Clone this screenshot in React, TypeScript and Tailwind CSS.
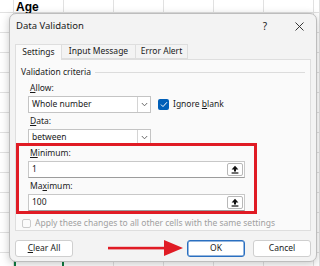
import React from 'react'

const font = { fontFamily: '"Noto Sans", "Open Sans", sans-serif' }

function Chevron() {
  return (
    <svg width="7" height="5" viewBox="0 0 7 5" fill="none">
      <path d="M0.8 1 L3.5 3.8 L6.2 1" stroke="#5a5a5a" strokeWidth="0.9" />
    </svg>
  )
}

function UploadIcon() {
  return (
    <svg width="8" height="9" viewBox="0 0 8 9">
      <path d="M4 0.8 L7.4 4.4 H5 V6.6 H3 V4.4 H0.6 Z" fill="#111" />
      <rect x="0.6" y="7.4" width="6.8" height="1.2" fill="#111" />
    </svg>
  )
}

function Select({ value }: { value: string }) {
  return (
    <div className="flex h-[17px] w-[123px] border border-[#c4c4c4] bg-white">
      <div className="flex flex-1 items-center pl-[3px] text-[8.5px] text-[#1a1a1a]">{value}</div>
      <div className="flex w-[13px] items-center justify-center border-l border-[#d4d4d4]">
        <Chevron />
      </div>
    </div>
  )
}

function RangeInput({ value }: { value: string }) {
  return (
    <div className="flex h-[17px] w-[217px] items-center border border-[#c8c8c8] border-b-[#9c9c9c] bg-white pl-[3px] pr-[1px]">
      <span className="flex-1 text-[8.5px] text-[#1a1a1a]">{value}</span>
      <div className="flex h-[13px] w-[16px] items-center justify-center rounded-[2px] border border-[#b8b8b8] bg-white">
        <UploadIcon />
      </div>
    </div>
  )
}

function Label({ children }: { children: React.ReactNode }) {
  return <div className="flex h-[12px] items-center pl-[14px] text-[8.5px] text-[#1a1a1a]">{children}</div>
}

function Button({ children, primary }: { children: React.ReactNode; primary?: boolean }) {
  return (
    <button
      className={`flex h-[17px] w-[58px] items-center justify-center rounded-[3px] bg-white text-[8.5px] text-[#1a1a1a] ${
        primary ? 'border border-[#2a6fc0] shadow-[inset_0_0_0_0.5px_#2a6fc0]' : 'border border-[#cfcfcf]'
      }`}
    >
      {children}
    </button>
  )
}

export default function App() {
  const rows = 14
  const cols = 8

  return (
    <div className="relative h-[266px] w-[320px] overflow-hidden bg-white" style={font}>
      {/* sheet grid */}
      <div className="grid grid-cols-[14px_repeat(6,50px)_1fr] grid-rows-[13px_repeat(13,20px)]">
        {Array.from({ length: rows * cols }).map((_, i) => {
          const r = Math.floor(i / cols)
          const c = i % cols
          const selected = r === 13 && c === 1
          return (
            <div
              key={i}
              className={`relative ${selected ? 'border-2 border-[#107c41]' : 'border-b border-r border-[#e1e1e1]'}`}
            >
              {r === 0 && c === 1 && (
                <span
                  className="absolute left-[2px] top-[1px] text-[12px] font-bold leading-[12px] text-black"
                  style={{ fontFamily: '"Liberation Sans", Arial, sans-serif' }}
                >
                  Age
                </span>
              )}
            </div>
          )
        })}
      </div>

      {/* dialog */}
      <div className="absolute left-[9px] top-[13px] flex h-[249px] w-[308px] flex-col rounded-[7px] border border-[#bdbdbd] bg-[#f3f3f3] shadow-[0_2px_8px_rgba(0,0,0,0.22)]">
        <div className="flex h-[24px] items-center pl-[6px] pr-[12px]">
          <span className="flex-1 text-[9.5px] text-[#1a1a1a]">Data Validation</span>
          <span className="mr-[28px] text-[10px] text-[#1a1a1a]">?</span>
          <svg width="9" height="9" viewBox="0 0 9 9">
            <path d="M0.5 0.5 L8.5 8.5 M8.5 0.5 L0.5 8.5" stroke="#222" strokeWidth="0.9" />
          </svg>
        </div>

        {/* tabs */}
        <div className="mt-[6px] flex h-[15px] items-end pl-[5px]">
          <div className="relative z-10 -mb-px flex h-[16px] w-[47px] items-center justify-center border border-b-0 border-[#dedede] bg-[#fafafa] text-[8.5px] text-[#1a1a1a]">
            Settings
          </div>
          <div className="flex h-[15px] w-[74px] items-center justify-center border border-l-0 border-[#dedede] bg-[#f3f3f3] text-[8.5px] text-[#1a1a1a]">
            Input Message
          </div>
          <div className="flex h-[15px] w-[52px] items-center justify-center border border-l-0 border-[#dedede] bg-[#f3f3f3] text-[8.5px] text-[#1a1a1a]">
            Error Alert
          </div>
        </div>

        {/* panel */}
        <div className="relative mx-[5px] flex h-[172px] flex-col border border-[#dedede] bg-[#fafafa]">
          <div className="mt-[6px] flex h-[12px] items-center gap-[4px] px-[5px]">
            <span className="text-[8.5px] text-[#1a1a1a]">Validation criteria</span>
            <div className="h-px flex-1 bg-[#dcdcdc]" />
          </div>

          <div className="mt-[4px]">
            <Label>
              <span className="underline">A</span>llow:
            </Label>
          </div>
          <div className="mt-[2px] flex items-center pl-[12px]">
            <Select value="Whole number" />
            <div className="ml-[7px] flex h-[11px] w-[11px] items-center justify-center rounded-[2px] bg-[#005fb8]">
              <svg width="8" height="7" viewBox="0 0 8 7">
                <path d="M1 3.6 L3 5.6 L7 1.2" stroke="white" strokeWidth="1" fill="none" />
              </svg>
            </div>
            <span className="ml-[4px] text-[8.5px] text-[#1a1a1a]">
              Ignore <span className="underline">b</span>lank
            </span>
          </div>

          <div className="mt-[2px]">
            <Label>
              <span className="underline">D</span>ata:
            </Label>
          </div>
          <div className="mt-[2px] pl-[12px]">
            <Select value="between" />
          </div>

          <div className="mt-[1px]">
            <Label>
              <span className="underline">M</span>inimum:
            </Label>
          </div>
          <div className="mt-[2px] pl-[12px]">
            <RangeInput value="1" />
          </div>

          <div className="mt-[2px]">
            <Label>
              Ma<span className="underline">x</span>imum:
            </Label>
          </div>
          <div className="mt-[2px] pl-[12px]">
            <RangeInput value="100" />
          </div>

          <div className="mt-[6px] flex h-[12px] items-center pl-[6px]">
            <div className="h-[9px] w-[9px] rounded-[2px] border border-[#cbcbcb] bg-[#fbfbfb]" />
            <span className="ml-[4px] text-[8.5px] text-[#a0a0a0]">
              Apply these changes to all other cells with the same settings
            </span>
          </div>

          {/* highlight box */}
          <div className="absolute left-0 top-[83px] h-[71px] w-[241px] border-[3px] border-[#e01b24]" />
        </div>

        {/* buttons */}
        <div className="mt-[9px] flex items-center px-[5px]">
          <Button>
            <span className="underline">C</span>lear All
          </Button>
          <div className="flex-1" />
          <Button primary>OK</Button>
          <div className="w-[8px]" />
          <Button>Cancel</Button>
        </div>
      </div>

      {/* red arrow */}
      <svg className="absolute left-[106px] top-[239px]" width="80" height="18" viewBox="0 0 80 18">
        <rect x="2" y="7.8" width="60" height="2.6" fill="#e01b24" />
        <path d="M58 1 L77 9 L58 17 Z" fill="#e01b24" />
      </svg>
    </div>
  )
}
